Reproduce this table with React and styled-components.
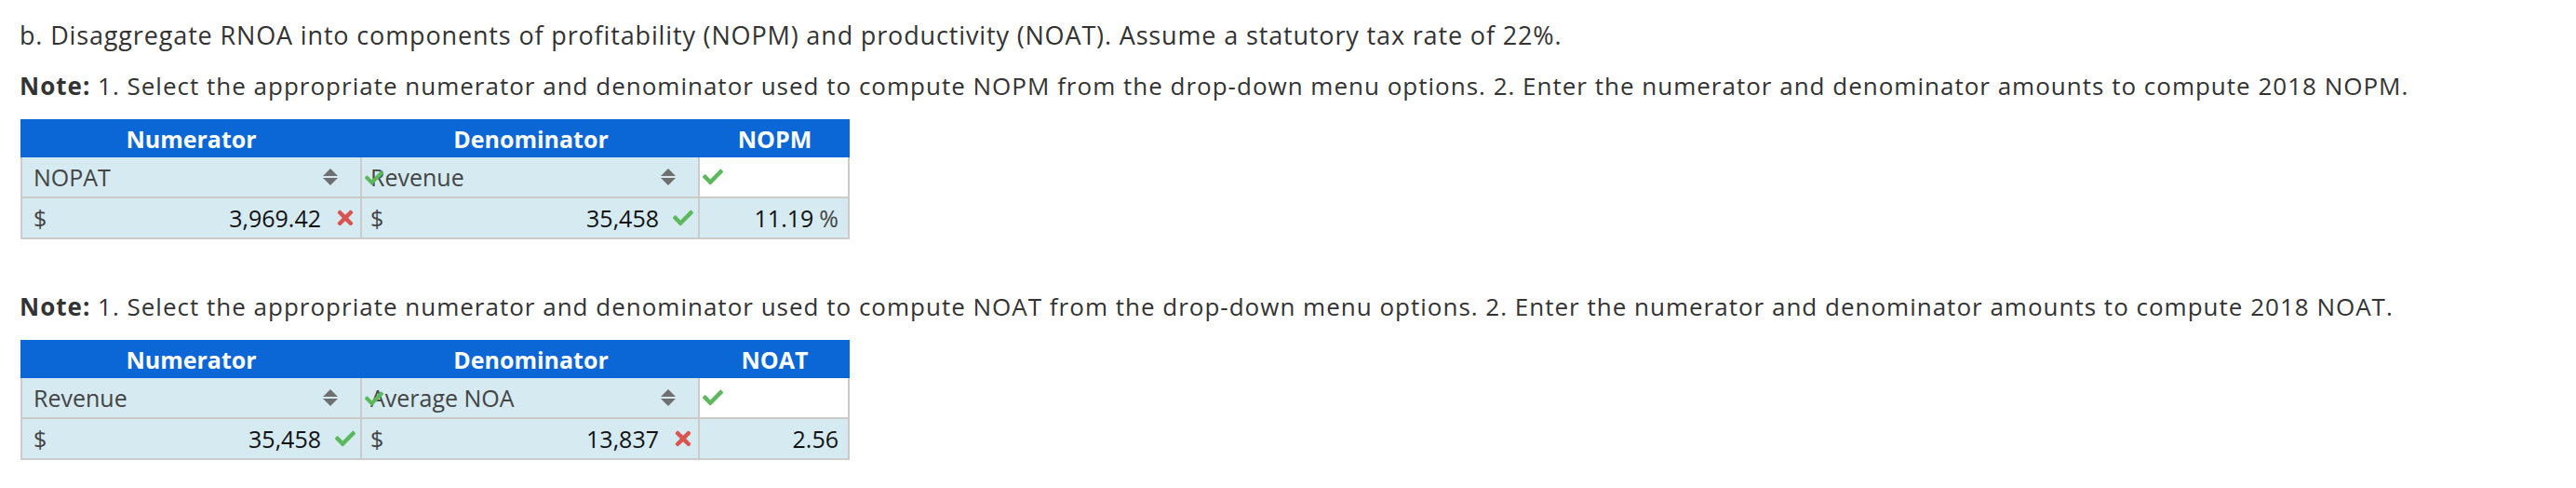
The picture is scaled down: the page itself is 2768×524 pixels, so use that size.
import React from "react";
import styled, { createGlobalStyle } from "styled-components";
import { FaCheck, FaTimes } from "react-icons/fa";

const GlobalStyle = createGlobalStyle`
  body {
    margin: 0;
    background: #fff;
    font-family: "Open Sans", "Liberation Sans", sans-serif;
    color: #333;
  }
`;

// data for the two tables
const tables = [
  {
    note: "1. Select the appropriate numerator and denominator used to compute NOPM from the drop-down menu options. 2. Enter the numerator and denominator amounts to compute 2018 NOPM.",
    title: "NOPM",
    numSelect: "NOPAT",
    denSelect: "Revenue",
    numAmount: "3,969.42",
    numOk: false,
    denAmount: "35,458",
    denOk: true,
    result: "11.19",
    unit: "%",
  },
  {
    note: "1. Select the appropriate numerator and denominator used to compute NOAT from the drop-down menu options. 2. Enter the numerator and denominator amounts to compute 2018 NOAT.",
    title: "NOAT",
    numSelect: "Revenue",
    denSelect: "Average NOA",
    numAmount: "35,458",
    numOk: true,
    denAmount: "13,837",
    denOk: false,
    result: "2.56",
    unit: "",
  },
];

const SortIcon = () => (
  <SortSvg width="16" height="18" viewBox="0 0 16 18">
    <path d="M8 0 L16 8 L0 8 Z" fill="#6f6f6f" />
    <path d="M0 10 L16 10 L8 18 Z" fill="#6f6f6f" />
  </SortSvg>
);

const Mark = ({ ok }) =>
  ok ? (
    <MarkBox>
      <FaCheck size={22} color="#5cb85c" />
    </MarkBox>
  ) : (
    <MarkBox>
      <FaTimes size={24} color="#d9534f" />
    </MarkBox>
  );

const RatioTable = ({ data }) => (
  <Table>
    <HeadRow>
      <HeadCell>Numerator</HeadCell>
      <HeadCell>Denominator</HeadCell>
      <HeadCell>{data.title}</HeadCell>
    </HeadRow>
    <Row>
      <Cell first>
        <SelectText>{data.numSelect}</SelectText>
        <SortIcon />
      </Cell>
      <Cell>
        <SelectCheck>
          <FaCheck size={20} color="#5cb85c" />
        </SelectCheck>
        <SelectText>{data.denSelect}</SelectText>
        <SortIcon />
      </Cell>
      <Cell white>
        <FaCheck size={22} color="#5cb85c" />
      </Cell>
    </Row>
    <Row>
      <Cell first>
        <Dollar>$</Dollar>
        <Amount>{data.numAmount}</Amount>
        <Mark ok={data.numOk} />
      </Cell>
      <Cell>
        <Dollar>$</Dollar>
        <Amount>{data.denAmount}</Amount>
        <Mark ok={data.denOk} />
      </Cell>
      <Cell>
        <Result>
          {data.result}
          {data.unit && <Unit>{data.unit}</Unit>}
        </Result>
      </Cell>
    </Row>
  </Table>
);

const App = () => {
  return (
    <>
      <GlobalStyle />
      <Page>
        <Intro>
          b. Disaggregate RNOA into components of profitability (NOPM) and productivity (NOAT). Assume a statutory tax rate of 22%.
        </Intro>
        {tables.map((t, i) => (
          <Section key={t.title} second={i > 0}>
            <Note>
              <b>Note:</b> {t.note}
            </Note>
            <RatioTable data={t} />
          </Section>
        ))}
      </Page>
    </>
  );
};

const Page = styled.div`
  padding: 20px 0 0 21px;
`;

const Intro = styled.p`
  margin: 0;
  font-size: 27px;
  letter-spacing: 0.85px;
  line-height: 35px;
  color: #333;
`;

const Note = styled.p`
  margin: 0 0 18px;
  font-size: 26px;
  letter-spacing: 1px;
  line-height: 35px;
  color: #333;

  b {
    font-weight: 700;
  }
`;

const Section = styled.section`
  margin-top: ${(p) => (p.second ? "55px" : "20px")};
`;

const Table = styled.div`
  width: 891px;
  margin-left: 1px;
`;

const HeadRow = styled.div`
  display: grid;
  grid-template-columns: 367px 363px 161px;
  height: 41px;
  background: #0b66d6;
`;

const HeadCell = styled.div`
  display: flex;
  align-items: center;
  justify-content: center;
  color: #fff;
  font-weight: 700;
  font-size: 25px;
`;

const Row = styled.div`
  display: grid;
  grid-template-columns: 367px 363px 161px;
  height: 44px;
`;

const Cell = styled.div`
  position: relative;
  box-sizing: border-box;
  display: flex;
  align-items: center;
  background: ${(p) => (p.white ? "#fff" : "#d5eaf1")};
  border-right: 2px solid #cbcbcb;
  border-bottom: 2px solid #cbcbcb;
  border-left: ${(p) => (p.first ? "2px solid #cbcbcb" : "none")};
  padding: 0 4px 0 ${(p) => (p.first ? "12px" : p.white ? "3px" : "9px")};
  font-size: 25px;
`;

const SelectText = styled.span`
  flex: 1;
  color: #444;
`;

const SortSvg = styled.svg`
  margin-right: 20px;
  flex-shrink: 0;
`;

const SelectCheck = styled.span`
  position: absolute;
  left: 3px;
  top: 12px;
  display: flex;
`;

const Dollar = styled.span`
  color: #444;
`;

const Amount = styled.span`
  flex: 1;
  text-align: right;
  color: #111;
  margin-right: 14px;
`;

const MarkBox = styled.span`
  width: 24px;
  display: flex;
  justify-content: center;
  align-items: center;
`;

const Result = styled.span`
  flex: 1;
  text-align: right;
  padding-right: 6px;
  color: #111;
`;

const Unit = styled.span`
  margin-left: 6px;
  color: #444;
`;

export default App;
